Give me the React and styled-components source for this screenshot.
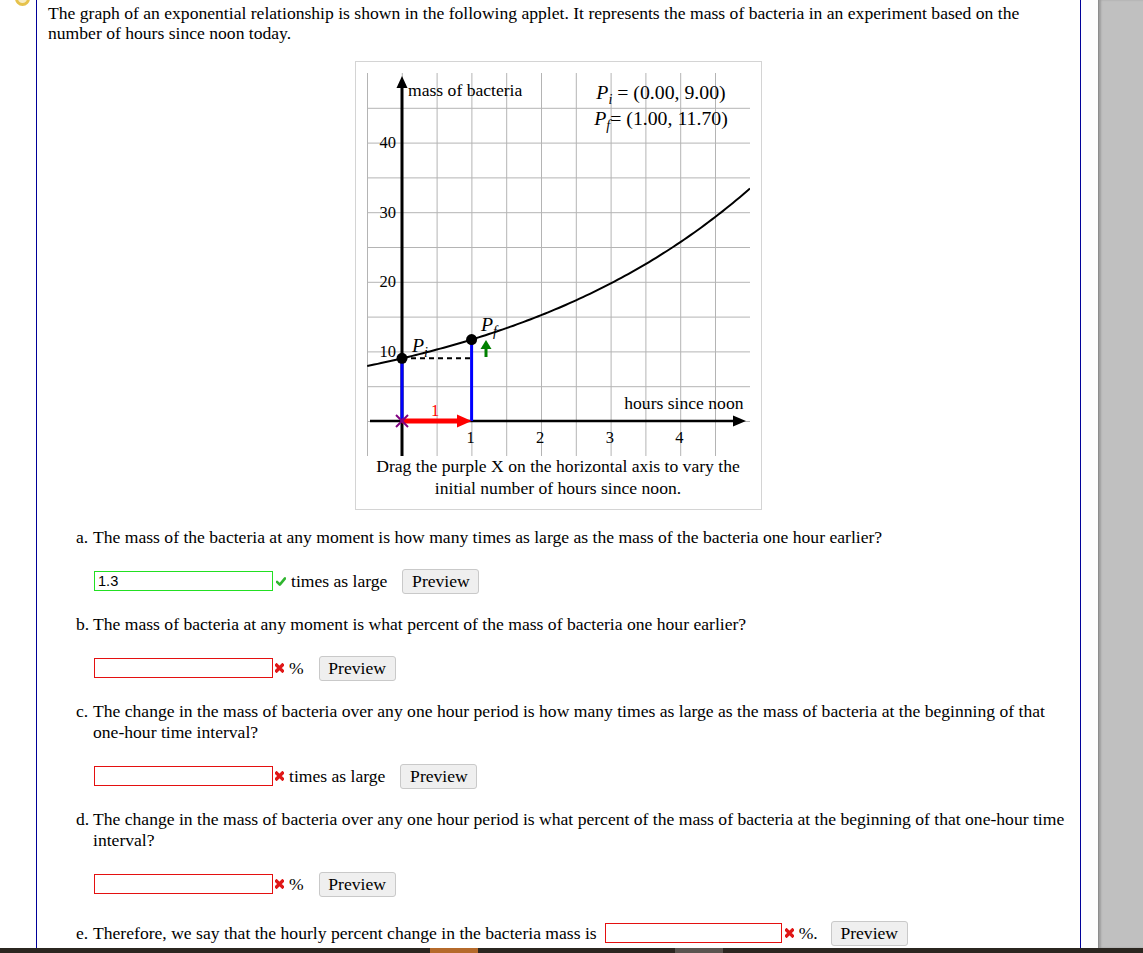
import React from "react";
import styled, { createGlobalStyle } from "styled-components";

const GlobalStyle = createGlobalStyle`
  html, body {
    margin: 0;
    padding: 0;
    background: #ffffff;
    overflow: hidden;
  }
  body {
    font-family: "Liberation Serif", "Times New Roman", serif;
    font-size: 17.6px;
    color: #000000;
  }
`;

const Page = styled.div`
  width: 1143px;
  height: 953px;
  display: flex;
  flex-direction: column;
  overflow: hidden;
`;

const Main = styled.div`
  flex: 1;
  min-height: 0;
  display: flex;
`;

const Gutter = styled.div`
  width: 36px;
  flex: none;
  overflow: hidden;
`;

const Ring = styled.span`
  display: block;
  width: 9px;
  height: 9px;
  margin: -9px 0 0 15px;
  border: 3px solid #e6c24c;
  border-radius: 50%;
  background: #f7ecc4;
`;

const Content = styled.div`
  width: 1045px;
  flex: none;
  box-sizing: border-box;
  border-left: 1px solid #000099;
  border-right: 1px solid #000099;
  padding: 3px 12px 0 11px;
  overflow: hidden;
`;

const Intro = styled.p`
  margin: 0;
  line-height: 20px;
`;

const Applet = styled.div`
  width: 407px;
  box-sizing: border-box;
  margin: 18px auto 0;
  border: 1px solid #d4d4d4;
  padding: 11px 11px 10px;
`;

const Graph = styled.svg`
  display: block;
  width: 383px;
  height: 383px;
`;

const Caption = styled.div`
  margin-top: -1px;
  text-align: center;
  line-height: 22px;
`;

const QuestionList = styled.div`
  margin-top: 17px;
  padding-left: 28px;
  display: flex;
  flex-direction: column;
  gap: 20px;
  line-height: 21px;
`;

const Question = styled.div`
  display: grid;
  grid-template-columns: 17px 1fr;
  row-gap: 20px;
`;

const Marker = styled.span`
  grid-column: 1;
  align-self: ${(p) => (p.$center ? "center" : "start")};
  margin-top: ${(p) => (p.$center ? 1 : 0)}px;
`;

const Prompt = styled.div`
  grid-column: 2;
`;

const InlinePrompt = styled.div`
  grid-column: 2;
  display: flex;
  align-items: center;
  height: 30px;
  margin-top: 1px;
`;

const AnswerRow = styled.div`
  grid-column: 2;
  display: flex;
  align-items: center;
  height: 26px;
  padding-left: 1px;
`;

const AnswerInput = styled.input`
  box-sizing: border-box;
  width: ${(p) => p.$width || 179}px;
  height: 20px;
  margin: 0 0 0 ${(p) => p.$lead || 0}px;
  padding: 0 3px;
  border: 1px solid ${(p) => (p.$ok ? "#22e022" : "#e41010")};
  outline: none;
  font-family: "Liberation Sans", Arial, sans-serif;
  font-size: 14.6px;
  color: #000;
  background: #fff;
`;

const MarkBox = styled.svg`
  flex: none;
  margin-left: ${(p) => p.$lead}px;
`;

const Unit = styled.span`
  margin-left: 5px;
`;

const PreviewButton = styled.button`
  box-sizing: border-box;
  height: 25px;
  width: ${(p) => p.$width || 77}px;
  margin-left: ${(p) => p.$gap}px;
  padding: 0;
  border: 1px solid #c9c9c9;
  border-radius: 3px;
  background: #efefef;
  font-family: "Liberation Serif", "Times New Roman", serif;
  font-size: 17.6px;
  color: #000;
  line-height: 23px;
`;

const Spacer = styled.div`
  width: 17px;
  flex: none;
  background: #fdfdfd;
`;

const ScrollPanel = styled.div`
  flex: 1;
  background: #c0c0c0;
  border-left: 1px solid #8c8c8c;
  box-shadow: inset 2px 0 2px rgba(0, 0, 0, 0.18);
`;

const TaskBar = styled.div`
  height: 5px;
  flex: none;
  display: flex;
  background: #2b2620;
`;

const TaskSegment = styled.div`
  width: 48px;
  margin-left: ${(p) => p.$lead}px;
  background: ${(p) => p.$color};
`;

function CheckMark() {
  return (
    <MarkBox $lead={3} width="10" height="9" viewBox="0 0 10 9">
      <path d="M1 4.8 L3.8 7.6 L9 1.4" fill="none" stroke="#2fb52f" strokeWidth="2.6" strokeLinecap="round" strokeLinejoin="round" />
    </MarkBox>
  );
}

function CrossMark({ lead = 2 }) {
  return (
    <MarkBox $lead={lead} width="9" height="10" viewBox="0 0 9 10">
      <path d="M1.6 2.1 L7.4 7.9 M7.4 2.1 L1.6 7.9" fill="none" stroke="#e01818" strokeWidth="3.4" strokeLinecap="square" />
    </MarkBox>
  );
}

// graph coordinates: x in [-0.5, 5], y in [-5, 50]
const X = (x) => 35 + 69.6 * x;
const Y = (v) => 348 - 6.96 * v;

function curvePath() {
  const pts = [];
  for (let i = 0; i <= 110; i++) {
    const x = -0.5 + (5.5 * i) / 110;
    pts.push(`${X(x).toFixed(2)},${Y(9 * Math.pow(1.3, x)).toFixed(2)}`);
  }
  return "M" + pts.join(" L");
}

function BacteriaGraph() {
  const vLines = Array.from({ length: 11 }, (_, k) => k * 34.8);
  const hLines = Array.from({ length: 10 }, (_, k) => (k + 1) * 34.8);
  const font = "Liberation Serif, Times New Roman, serif";
  return (
    <Graph viewBox="0 0 383 383" fontFamily={font}>
      {vLines.map((x) => (
        <line key={"v" + x} x1={x + 0.5} y1="0" x2={x + 0.5} y2="383" stroke="#b4b4b4" strokeWidth="1" />
      ))}
      {hLines.map((y) => (
        <line key={"h" + y} x1="0" y1={y + 0.5} x2="383" y2={y + 0.5} stroke="#b4b4b4" strokeWidth="1" />
      ))}

      <line x1="35" y1="383" x2="35" y2="14" stroke="#000" strokeWidth="3" />
      <polygon points="35,3 29.5,15 40.5,15" fill="#000" />
      <line x1="3" y1="348" x2="368" y2="348" stroke="#000" strokeWidth="2.5" />
      <polygon points="379,348 366,342.5 366,353.5" fill="#000" />

      <path d={curvePath()} fill="none" stroke="#000" strokeWidth="2" />

      <line x1={X(0)} y1="348" x2={X(0)} y2={Y(9)} stroke="#0000ff" strokeWidth="3" />
      <line x1={X(1)} y1="348" x2={X(1)} y2={Y(11.7)} stroke="#0000ff" strokeWidth="3" />
      <line x1={X(0)} y1={Y(9)} x2={X(1)} y2={Y(9)} stroke="#000" strokeWidth="2" strokeDasharray="5 4" />

      <line x1={X(0)} y1="348" x2="92" y2="348" stroke="#ff0000" strokeWidth="5" />
      <polygon points={`${X(1)},348 90,341.5 90,354.5`} fill="#ff0000" />
      <text x="68" y="343" fontSize="16.5" fill="#ff0000" textAnchor="middle">1</text>

      <line x1="29" y1="342" x2="41" y2="354" stroke="#800080" strokeWidth="2" />
      <line x1="29" y1="354" x2="41" y2="342" stroke="#800080" strokeWidth="2" />

      <line x1="119" y1="284" x2="119" y2="274" stroke="#008000" strokeWidth="3" />
      <polygon points="119,267 113.5,276 124.5,276" fill="#008000" />

      <circle cx={X(0)} cy={Y(9)} r="5.5" fill="#000" />
      <circle cx={X(1)} cy={Y(11.7)} r="5.5" fill="#000" />

      <text x="45" y="279" fontSize="19.8" fontStyle="italic">
        P<tspan dy="5" fontSize="14">i</tspan>
      </text>
      <text x="114" y="258" fontSize="19.8" fontStyle="italic">
        P<tspan dy="5" fontSize="14">f</tspan>
      </text>

      <text x="41" y="23" fontSize="17.6">mass of bacteria</text>
      <text x="294" y="26" fontSize="19.8" textAnchor="middle">
        <tspan fontStyle="italic">P</tspan>
        <tspan dy="5" fontSize="14" fontStyle="italic">i</tspan>
        <tspan dy="-5"> = (0.00, 9.00)</tspan>
      </text>
      <text x="294" y="52" fontSize="19.8" textAnchor="middle">
        <tspan fontStyle="italic">P</tspan>
        <tspan dy="5" fontSize="14" fontStyle="italic">f</tspan>
        <tspan dy="-5">= (1.00, 11.70)</tspan>
      </text>

      {[10, 20, 30, 40].map((v) => (
        <text key={v} x="29" y={Y(v) + 5.3} fontSize="16.5" textAnchor="end">{v}</text>
      ))}
      {[1, 2, 3, 4].map((n) => (
        <text key={n} x={X(n) - 1} y="369.5" fontSize="16.5" textAnchor="middle">{n}</text>
      ))}
      <text x="376.5" y="335.5" fontSize="17.6" textAnchor="end">hours since noon</text>
    </Graph>
  );
}

function Answer({ ok, value, unit, unitGap = 15 }) {
  return (
    <AnswerRow>
      <AnswerInput $ok={ok} defaultValue={value || ""} />
      {ok ? <CheckMark /> : <CrossMark />}
      <Unit>{unit}</Unit>
      <PreviewButton $gap={unitGap}>Preview</PreviewButton>
    </AnswerRow>
  );
}

export default function App() {
  return (
    <>
      <GlobalStyle />
      <Page>
        <Main>
          <Gutter>
            <Ring />
          </Gutter>
          <Content>
            <Intro>
              The graph of an exponential relationship is shown in the following applet. It represents the mass of
              bacteria in an experiment based on the number of hours since noon today.
            </Intro>

            <Applet>
              <BacteriaGraph />
              <Caption>
                Drag the purple X on the horizontal axis to vary the
                <br />
                initial number of hours since noon.
              </Caption>
            </Applet>

            <QuestionList>
              <Question>
                <Marker>a.</Marker>
                <Prompt>
                  The mass of the bacteria at any moment is how many times as large as the mass of the bacteria one hour
                  earlier?
                </Prompt>
                <Answer ok value="1.3" unit="times as large" />
              </Question>

              <Question>
                <Marker>b.</Marker>
                <Prompt>The mass of bacteria at any moment is what percent of the mass of bacteria one hour earlier?</Prompt>
                <Answer unit="%" />
              </Question>

              <Question>
                <Marker>c.</Marker>
                <Prompt>
                  The change in the mass of bacteria over any one hour period is how many times as large as the mass of
                  bacteria at the beginning of that one-hour time interval?
                </Prompt>
                <Answer unit="times as large" />
              </Question>

              <Question>
                <Marker>d.</Marker>
                <Prompt>
                  The change in the mass of bacteria over any one hour period is what percent of the mass of bacteria at
                  the beginning of that one-hour time interval?
                </Prompt>
                <Answer unit="%" />
              </Question>

              <Question>
                <Marker $center>e.</Marker>
                <InlinePrompt>
                  <span>Therefore, we say that the hourly percent change in the bacteria mass is</span>
                  <AnswerInput $width={177} $lead={8} />
                  <CrossMark lead={3} />
                  <Unit>%.</Unit>
                  <PreviewButton $gap={13} $width={77}>Preview</PreviewButton>
                </InlinePrompt>
              </Question>
            </QuestionList>
          </Content>
          <Spacer />
          <ScrollPanel />
        </Main>
        <TaskBar>
          <TaskSegment $lead={430} $color="#b56a2b" />
          <TaskSegment $lead={197} $color="#5a5550" />
        </TaskBar>
      </Page>
    </>
  );
}
